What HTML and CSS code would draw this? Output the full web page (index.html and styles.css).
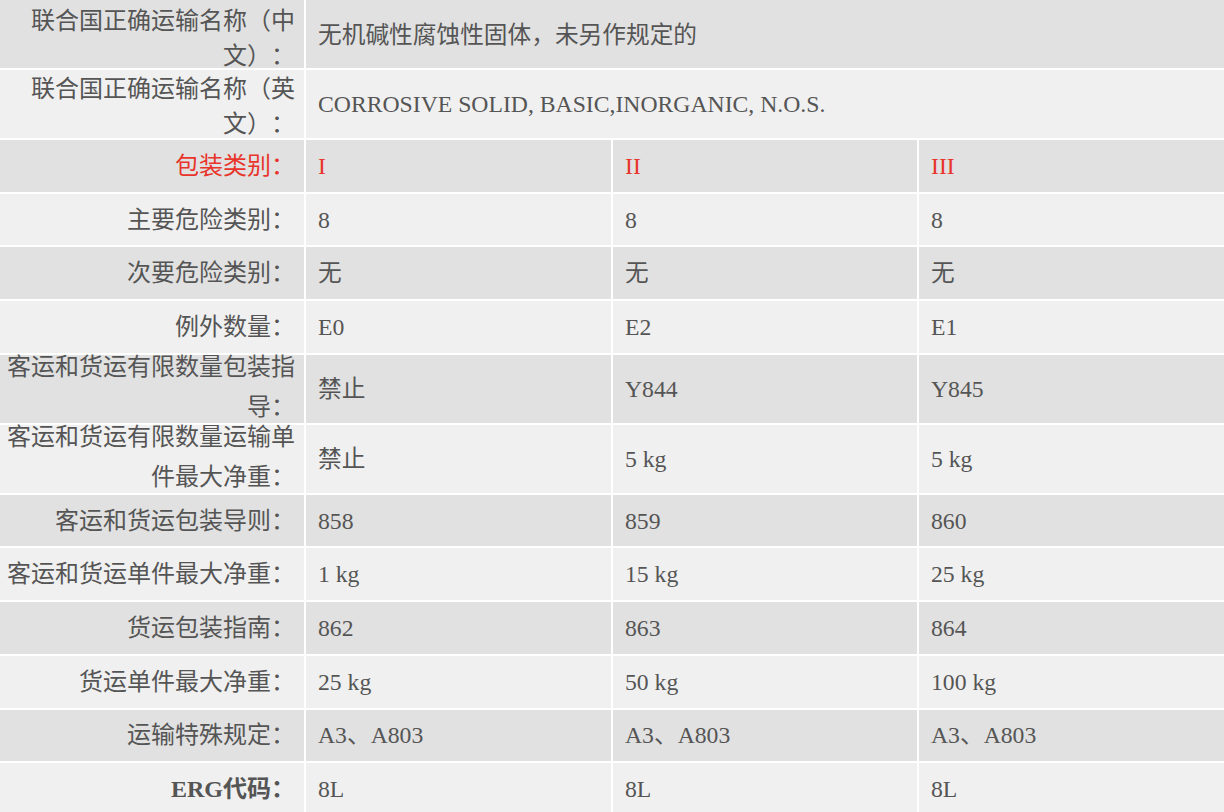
FILE: index.html
```html
<!DOCTYPE html>
<html lang="zh">
<head>
<meta charset="utf-8">
<title>联合国正确运输名称</title>
<link rel="stylesheet" href="styles.css">
</head>
<body>
<div class="table">
  <div class="row double dark">
    <div class="cell label lh35 first"><span>联合国正确运输名称（中文）：</span></div>
    <div class="cell value wide cjk-top">无机碱性腐蚀性固体，未另作规定的</div>
  </div>
  <div class="row double light">
    <div class="cell label lh35"><span>联合国正确运输名称（英文）：</span></div>
    <div class="cell value wide">CORROSIVE SOLID, BASIC,INORGANIC, N.O.S.</div>
  </div>
  <div class="row single dark red">
    <div class="cell label">包装类别：</div>
    <div class="cell value">I</div>
    <div class="cell value">II</div>
    <div class="cell value">III</div>
  </div>
  <div class="row single light">
    <div class="cell label">主要危险类别：</div>
    <div class="cell value">8</div>
    <div class="cell value">8</div>
    <div class="cell value">8</div>
  </div>
  <div class="row single dark">
    <div class="cell label">次要危险类别：</div>
    <div class="cell value">无</div>
    <div class="cell value">无</div>
    <div class="cell value">无</div>
  </div>
  <div class="row single light">
    <div class="cell label">例外数量：</div>
    <div class="cell value">E0</div>
    <div class="cell value">E2</div>
    <div class="cell value">E1</div>
  </div>
  <div class="row double dark">
    <div class="cell label lh40"><span>客运和货运有限数量包装指导：</span></div>
    <div class="cell value">禁止</div>
    <div class="cell value">Y844</div>
    <div class="cell value">Y845</div>
  </div>
  <div class="row double light">
    <div class="cell label lh40"><span>客运和货运有限数量运输单件最大净重：</span></div>
    <div class="cell value">禁止</div>
    <div class="cell value">5 kg</div>
    <div class="cell value">5 kg</div>
  </div>
  <div class="row single dark">
    <div class="cell label">客运和货运包装导则：</div>
    <div class="cell value">858</div>
    <div class="cell value">859</div>
    <div class="cell value">860</div>
  </div>
  <div class="row single light">
    <div class="cell label">客运和货运单件最大净重：</div>
    <div class="cell value">1 kg</div>
    <div class="cell value">15 kg</div>
    <div class="cell value">25 kg</div>
  </div>
  <div class="row single dark">
    <div class="cell label">货运包装指南：</div>
    <div class="cell value">862</div>
    <div class="cell value">863</div>
    <div class="cell value">864</div>
  </div>
  <div class="row single light">
    <div class="cell label">货运单件最大净重：</div>
    <div class="cell value">25 kg</div>
    <div class="cell value">50 kg</div>
    <div class="cell value">100 kg</div>
  </div>
  <div class="row single dark">
    <div class="cell label">运输特殊规定：</div>
    <div class="cell value">A3、A803</div>
    <div class="cell value">A3、A803</div>
    <div class="cell value">A3、A803</div>
  </div>
  <div class="row single light">
    <div class="cell label bold">ERG代码：</div>
    <div class="cell value">8L</div>
    <div class="cell value">8L</div>
    <div class="cell value">8L</div>
  </div>
</div>
</body>
</html>
```
FILE: styles.css
```css
html, body {
  margin: 0;
  padding: 0;
  background: #ffffff;
}
body {
  width: 1224px;
  height: 812px;
  overflow: hidden;
  font-family: "Liberation Serif", "Noto Sans CJK SC", serif;
  font-size: 24px;
  color: #555555;
  text-spacing-trim: space-all;
}
.table {
  display: flex;
  flex-direction: column;
  gap: 2px;
}
.row {
  display: grid;
  grid-template-columns: 304px 305px 304px 1fr;
  grid-template-rows: minmax(0, 1fr);
  column-gap: 2px;
}
.row.single { height: 51.7px; }
.row.double { height: 68px; }
.row.dark .cell { background: #e1e1e1; }
.row.light .cell { background: #f0f0f0; }
.cell {
  display: flex;
  align-items: center;
  min-width: 0;
  min-height: 0;
  box-sizing: border-box;
  line-height: 32px;
  white-space: nowrap;
}
.label {
  justify-content: flex-end;
  padding: 0 9px 0 7px;
  text-align: right;
  white-space: normal;
}
.label span { display: block; }
.lh35 {
  line-height: 35px;
  padding-top: 6px;
}
.lh35.first { padding-top: 10px; }
.lh40 {
  line-height: 40px;
  padding-bottom: 4px;
}
.value {
  padding-left: 12px;
  font-size: 23.7px;
}
.value.wide {
  grid-column: span 3;
}
.cjk-top { padding-top: 2px; }
.red .cell { color: #e8342a; }
.bold { font-weight: bold; }
```
